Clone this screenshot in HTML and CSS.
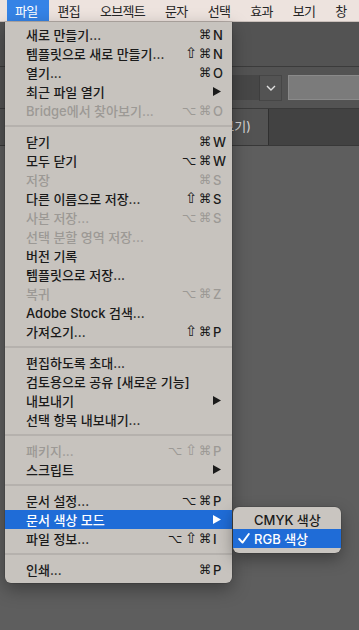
FILE: index.html
```html
<!DOCTYPE html>
<html lang="ko">
<head>
    <meta charset="UTF-8">
    <meta name="viewport" content="width=device-width, initial-scale=1.0">
    <title>파일 메뉴</title>
    <link rel="stylesheet" href="styles.css">
</head>
<body>
    <div class="menubar">
        <div class="menubar-item active">파일</div>
        <div class="menubar-item">편집</div>
        <div class="menubar-item">오브젝트</div>
        <div class="menubar-item">문자</div>
        <div class="menubar-item">선택</div>
        <div class="menubar-item">효과</div>
        <div class="menubar-item">보기</div>
        <div class="menubar-item">창</div>
    </div>

    <div class="app">
        <div class="app-top"></div>
        <div class="control-bar">
            <div class="field"></div>
            <div class="dropdown-btn">
                <svg width="10" height="6" viewBox="0 0 10 6"><path d="M1 1 L5 5 L9 1" fill="none" stroke="#e0e0e0" stroke-width="1.4"/></svg>
            </div>
            <div class="input-light"></div>
        </div>
        <div class="tabbar">
            <div class="doc-tab">제목 없음-1 @ 66.67% (CMYK/미리 보기)</div>
        </div>
        <div class="canvas"></div>
    </div>

    <div class="menu">
        <div class="item"><span class="label">새로 만들기...</span><span class="mods">⌘</span><span class="key">N</span></div>
        <div class="item"><span class="label">템플릿으로 새로 만들기...</span><span class="mods"><span class="shift">⇧</span>⌘</span><span class="key">N</span></div>
        <div class="item"><span class="label">열기...</span><span class="mods">⌘</span><span class="key">O</span></div>
        <div class="item"><span class="label">최근 파일 열기</span><span class="key"><svg class="arrow" width="8" height="9" viewBox="0 0 8 9"><polygon points="0,0 8,4.5 0,9"/></svg></span></div>
        <div class="item disabled"><span class="label">Bridge에서 찾아보기...</span><span class="mods">⌥⌘</span><span class="key">O</span></div>
        <div class="sep"></div>
        <div class="item"><span class="label">닫기</span><span class="mods">⌘</span><span class="key">W</span></div>
        <div class="item"><span class="label">모두 닫기</span><span class="mods">⌥⌘</span><span class="key">W</span></div>
        <div class="item disabled"><span class="label">저장</span><span class="mods">⌘</span><span class="key">S</span></div>
        <div class="item"><span class="label">다른 이름으로 저장...</span><span class="mods"><span class="shift">⇧</span>⌘</span><span class="key">S</span></div>
        <div class="item disabled"><span class="label">사본 저장...</span><span class="mods">⌥⌘</span><span class="key">S</span></div>
        <div class="item disabled"><span class="label">선택 분할 영역 저장...</span></div>
        <div class="item"><span class="label">버전 기록</span></div>
        <div class="item"><span class="label">템플릿으로 저장...</span></div>
        <div class="item disabled"><span class="label">복귀</span><span class="mods">⌥⌘</span><span class="key">Z</span></div>
        <div class="item"><span class="label">Adobe Stock 검색...</span></div>
        <div class="item"><span class="label">가져오기...</span><span class="mods"><span class="shift">⇧</span>⌘</span><span class="key">P</span></div>
        <div class="sep"></div>
        <div class="item"><span class="label">편집하도록 초대...</span></div>
        <div class="item"><span class="label">검토용으로 공유 [새로운 기능]</span></div>
        <div class="item"><span class="label">내보내기</span><span class="key"><svg class="arrow" width="8" height="9" viewBox="0 0 8 9"><polygon points="0,0 8,4.5 0,9"/></svg></span></div>
        <div class="item"><span class="label">선택 항목 내보내기...</span></div>
        <div class="sep"></div>
        <div class="item disabled"><span class="label">패키지...</span><span class="mods">⌥<span class="shift">⇧</span>⌘</span><span class="key">P</span></div>
        <div class="item"><span class="label">스크립트</span><span class="key"><svg class="arrow" width="8" height="9" viewBox="0 0 8 9"><polygon points="0,0 8,4.5 0,9"/></svg></span></div>
        <div class="sep"></div>
        <div class="item"><span class="label">문서 설정...</span><span class="mods">⌥⌘</span><span class="key">P</span></div>
        <div class="item selected"><span class="label">문서 색상 모드</span><span class="key"><svg class="arrow" width="8" height="9" viewBox="0 0 8 9"><polygon points="0,0 8,4.5 0,9"/></svg></span></div>
        <div class="item"><span class="label">파일 정보...</span><span class="mods">⌥<span class="shift">⇧</span>⌘</span><span class="key">I</span></div>
        <div class="sep"></div>
        <div class="item"><span class="label">인쇄...</span><span class="mods">⌘</span><span class="key">P</span></div>
    </div>

    <div class="submenu">
        <div class="sub-item"><span class="check"></span><span class="label">CMYK 색상</span></div>
        <div class="sub-item selected">
            <span class="check"><svg width="12" height="11" viewBox="0 0 12 11"><path d="M1.2 6 L4.5 9.6 L10.8 1" fill="none" stroke="white" stroke-width="1.9" stroke-linecap="round" stroke-linejoin="round"/></svg></span>
            <span class="label">RGB 색상</span>
        </div>
    </div>
</body>
</html>
```

FILE: styles.css
```css
body, html {
    margin: 0;
    padding: 0;
    width: 100%;
    height: 100%;
    overflow: hidden;
}

body {
    font-family: Inter, "Noto Sans CJK KR", sans-serif;
    background-color: #5e5e5e;
    display: flex;
    flex-direction: column;
}

/* top mac menu bar */
.menubar {
    height: 22px;
    flex-shrink: 0;
    display: flex;
    align-items: stretch;
    padding-left: 7px;
    background-color: #ede3de;
    border-bottom: 1px solid #c9bfba;
    box-sizing: border-box;
}
.menubar-item {
    display: flex;
    align-items: center;
    padding: 0 9px 0 8px;
    margin-right: 3px;
    font-size: 13px;
    letter-spacing: -0.7px;
    color: #262626;
    white-space: nowrap;
}
.menubar-item.active {
    padding-right: 11px;
    margin-right: 1px;
    background-color: #3583e6;
    color: white;
}

/* illustrator window behind the menu */
.app {
    flex: 1;
    display: flex;
    flex-direction: column;
}
.app-top {
    height: 44px;
    background-color: #535353;
    border-bottom: 1px solid #3b3b3b;
}
.control-bar {
    height: 42px;
    box-sizing: border-box;
    padding: 8px 0 0 150px;
    display: flex;
    align-items: flex-start;
    background-color: #535353;
    border-bottom: 1px solid #3a3a3a;
}
.field {
    width: 109px;
    height: 25px;
    background-color: #474747;
}
.dropdown-btn {
    width: 21px;
    height: 24px;
    border: 1px solid #464646;
    border-left-color: #3e3e3e;
    display: flex;
    align-items: center;
    justify-content: center;
}
.input-light {
    flex: 1;
    height: 25px;
    margin-left: 6px;
    background-color: #7b7b7b;
    border: 1px solid #8a8a8a;
    border-right: none;
    box-sizing: border-box;
}
.tabbar {
    height: 36px;
    flex-shrink: 0;
    display: flex;
    background-color: #424242;
    border-bottom: 1px solid #383838;
}
.doc-tab {
    width: 269px;
    box-sizing: border-box;
    padding: 0 17px 4px 0;
    display: flex;
    align-items: center;
    justify-content: flex-end;
    background-color: #535353;
    border-right: 1px solid #303030;
    font-size: 13px;
    color: #d6d6d6;
    white-space: nowrap;
    overflow: hidden;
}
.canvas {
    flex: 1;
    background-color: #5e5e5e;
}

/* file menu dropdown */
.menu {
    position: absolute;
    left: 5px;
    top: 22px;
    width: 227px;
    padding: 3px 0 4px;
    background-color: #c7c3be;
    border-radius: 0 0 6px 6px;
    box-shadow: 0 6px 18px rgba(0, 0, 0, 0.35), 0 0 0 0.5px rgba(0, 0, 0, 0.2);
}
.item {
    height: 19px;
    display: flex;
    align-items: center;
    padding: 0 5px 0 21px;
    font-size: 13px;
    font-weight: 500;
    color: #1a1a1a;
    white-space: nowrap;
}
.item .label {
    flex: 1;
}
.mods {
    display: flex;
    align-items: center;
    font-family: "DejaVu Sans", sans-serif;
    font-size: 12.5px;
    font-weight: normal;
    letter-spacing: 2.5px;
    margin-right: -1px;
}
.shift {
    font-size: 15px;
    line-height: 1;
    letter-spacing: 1.5px;
}
.key {
    width: 14px;
    display: flex;
    align-items: center;
}
.arrow {
    fill: #1a1a1a;
}
.item.disabled {
    color: #9c9995;
}
.item.selected {
    background-color: #1f6cd7;
    color: white;
}
.item.selected .arrow {
    fill: white;
}
.sep {
    height: 2px;
    margin: 5px 0;
    background-color: #b5b1ad;
}

/* color mode submenu */
.submenu {
    position: absolute;
    left: 233px;
    top: 507px;
    width: 108px;
    padding: 3px 0 5px;
    background-color: #c9c5c0;
    border-radius: 6px;
    box-shadow: 0 6px 16px rgba(0, 0, 0, 0.35), 0 0 0 0.5px rgba(0, 0, 0, 0.2);
}
.sub-item {
    height: 19px;
    display: flex;
    align-items: center;
    padding-left: 5px;
    font-size: 13px;
    font-weight: 500;
    color: #1a1a1a;
    white-space: nowrap;
}
.sub-item .check {
    width: 16px;
    display: flex;
    align-items: center;
}
.sub-item.selected {
    background-color: #1f6cd7;
    color: white;
}
```
